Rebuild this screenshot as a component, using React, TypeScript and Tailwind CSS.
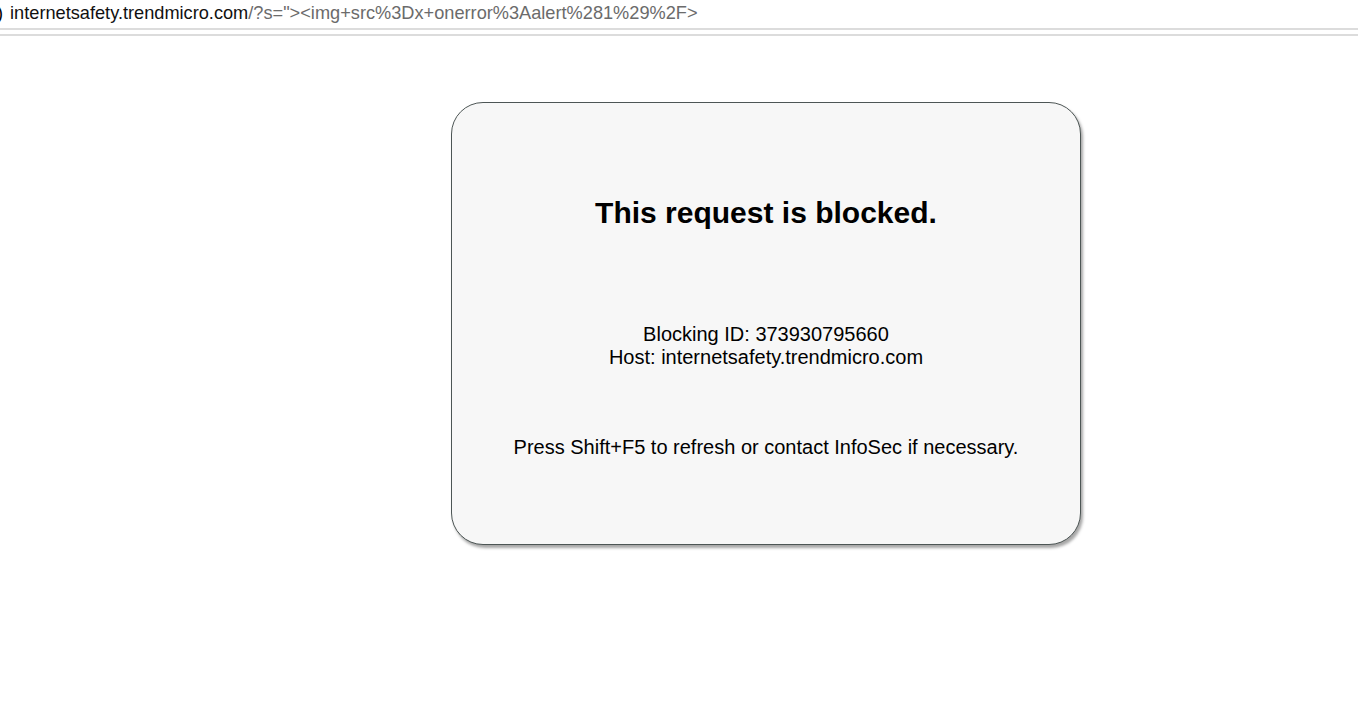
export default function App() {
  return (
    <div className="min-h-screen bg-white" style={{ fontFamily: '"Liberation Sans", Arial, sans-serif' }}>
      {/* address bar strip */}
      <div className="h-[28px] flex items-center overflow-hidden whitespace-nowrap text-[18.2px]">
        <span className="text-black -ml-[3px] mr-[7px]">)</span>
        <span className="text-[#111]">internetsafety.trendmicro.com</span>
        <span className="text-[#6b6b6b]">/?s="&gt;&lt;img+src%3Dx+onerror%3Aalert%281%29%2F&gt;</span>
      </div>
      <div className="h-[2px] bg-[#dcdcdc]" />
      <div className="h-[4px] bg-white" />
      <div className="h-[2px] bg-[#dcdcdc]" />

      <div className="pt-[66px] pl-[451px]">
        <div className="w-[630px] h-[443px] rounded-[32px] border border-[#4d5655] bg-[#f7f7f7] shadow-[2px_3px_3px_rgba(0,0,0,0.35)] flex flex-col items-center text-black">
          <h1 className="mt-[95px] text-[30px] font-bold leading-none">This request is blocked.</h1>
          <div className="mt-[95px] text-[20px] leading-[23px] text-center">
            <p>Blocking ID: 373930795660</p>
            <p>Host: internetsafety.trendmicro.com</p>
          </div>
          <p className="mt-[67px] text-[20px] leading-[23px]">Press Shift+F5 to refresh or contact InfoSec if necessary.</p>
        </div>
      </div>
    </div>
  );
}
